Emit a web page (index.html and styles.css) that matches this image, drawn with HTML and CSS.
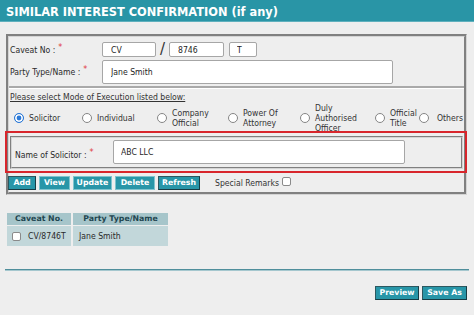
FILE: index.html
```html
<!DOCTYPE html>
<html>
<head>
<meta charset="utf-8">
<link rel="stylesheet" href="styles.css">
</head>
<body>
<div class="header">SIMILAR INTEREST CONFIRMATION (if any)</div>
<div class="main">
  <div class="box">
    <div class="row row1">
      <div class="label">Caveat No :<span class="req">*</span></div>
      <input class="inp w-cv" value="CV">
      <span class="slash">/</span>
      <input class="inp w-num" value="8746">
      <input class="inp w-t" value="T">
    </div>
    <div class="row row2">
      <div class="label">Party Type/Name :<span class="req">*</span></div>
      <input class="inp w-party" value="Jane Smith">
    </div>
    <div class="sep"></div>
    <div class="hint">Please select Mode of Execution listed below:</div>
    <div class="radios">
      <div class="opt"><span class="radio checked"></span><span class="otext">Solicitor</span></div>
      <div class="opt"><span class="radio"></span><span class="otext">Individual</span></div>
      <div class="opt"><span class="radio"></span><span class="otext">Company<br>Official</span></div>
      <div class="opt"><span class="radio"></span><span class="otext">Power Of<br>Attorney</span></div>
      <div class="opt"><span class="radio"></span><span class="otext">Duly<br>Authorised<br>Officer</span></div>
      <div class="opt"><span class="radio"></span><span class="otext">Official<br>Title</span></div>
      <div class="opt opt-last"><span class="radio"></span><span class="otext">Others</span></div>
    </div>
    <div class="highlight">
      <div class="inner">
        <div class="label label-sol">Name of Solicitor :<span class="req">*</span></div>
        <input class="inp w-sol" value="ABC LLC">
      </div>
    </div>
    <div class="actions">
      <button class="btn dark w-add">Add</button>
      <button class="btn w-view">View</button>
      <button class="btn w-upd">Update</button>
      <button class="btn w-del">Delete</button>
      <button class="btn dark w-ref">Refresh</button>
      <span class="remarks">Special Remarks</span>
      <span class="check"></span>
    </div>
  </div>

  <div class="grid">
    <div class="th">Caveat No.</div>
    <div class="th">Party Type/Name</div>
    <div class="td td1"><span class="check small"></span><span>CV/8746T</span></div>
    <div class="td td2">Jane Smith</div>
  </div>

  <div class="rule"></div>

  <div class="footer">
    <button class="btn dark w-prev">Preview</button>
    <button class="btn dark w-save">Save As</button>
  </div>
</div>
</body>
</html>
```

FILE: styles.css
```css
* { box-sizing: border-box; }

body {
  margin: 0;
  background: #eeeeee;
  font-family: "DejaVu Sans Condensed", "DejaVu Sans", sans-serif;
  font-stretch: condensed;
  font-size: 8.6px;
  color: #2a2a2a;
  width: 474px;
  height: 315px;
  overflow: hidden;
}

.header {
  height: 22px;
  background: #2995a6;
  color: #ffffff;
  font-family: "DejaVu Sans", sans-serif;
  font-stretch: normal;
  font-weight: bold;
  font-size: 11.4px;
  line-height: 19px;
  padding: 3px 0 0 6px;
  border-bottom: 1px solid #5fb0bd;
}

.main {
  padding: 12px 7px 0 6px;
}

.box {
  border: 3px groove #d4d4d4;
  padding: 0 0 2px 0;
}

.row {
  display: flex;
  align-items: center;
}

.row1 {
  height: 15px;
  margin-top: 5px;
}

.row2 {
  height: 24px;
  margin-top: 3px;
}

.label {
  width: 93px;
  padding-left: 1px;
  flex: none;
}

.req {
  color: #e0383e;
  position: relative;
  top: -3px;
  margin-left: 3px;
  font-size: 9px;
}

.inp {
  font-family: "DejaVu Sans Condensed", "DejaVu Sans", sans-serif;
  font-stretch: condensed;
  font-size: 8.6px;
  color: #1e1e1e;
  background: #ffffff;
  border: 1px solid #a6a6a6;
  border-radius: 2px;
  padding: 0 0 0 8px;
  margin: 0;
  outline: none;
}

.w-cv { width: 54px; height: 15px; }
.w-num { width: 55px; height: 15px; }
.w-t { width: 28px; height: 15px; margin-left: 5px; padding-left: 7px; }
.w-party { width: 291px; height: 24px; }

.slash {
  width: 13px;
  text-align: center;
  font-size: 15px;
  line-height: 15px;
  color: #333;
  font-family: "DejaVu Sans", sans-serif;
  font-stretch: normal;
}

.sep {
  margin-top: 2px;
  border-top: 2px solid #a9a9a9;
  border-bottom: 1px solid #ffffff;
}

.hint {
  margin-top: 3px;
  padding-left: 1px;
  line-height: 10px;
  text-decoration: underline;
  color: #333;
}

.radios {
  display: grid;
  grid-template-columns: 68px 75px 71px 72px 75px 44px auto;
  align-items: center;
  height: 28px;
  padding-left: 5px;
  margin-top: 1px;
}

.opt {
  display: flex;
  align-items: center;
  gap: 5px;
}

.opt-last { gap: 8px; }

.otext {
  line-height: 10px;
  color: #333;
}

.radio {
  width: 10px;
  height: 10px;
  border-radius: 50%;
  border: 1px solid #858585;
  background: #ffffff;
  flex: none;
}

.radio.checked {
  border: 1.5px solid #2a78d6;
  background: #2a78d6;
  box-shadow: inset 0 0 0 1.6px #ffffff;
}

.highlight {
  margin: 0 -3px 0 -4px;
  border: 2px solid #d8262c;
  padding: 3px 2px 2px 3px;
}

.inner {
  display: flex;
  align-items: center;
  height: 33px;
  border: 2px groove #d4d4d4;
  padding: 0 0 1px 0;
}

.label-sol {
  width: 101px;
  padding-left: 3px;
  padding-top: 6px;
}

.w-sol {
  width: 292px;
  height: 24px;
  padding-left: 7px;
}

.actions {
  display: flex;
  align-items: center;
  gap: 3px;
  margin-top: 3px;
  margin-left: -1px;
  height: 14px;
}

.btn {
  height: 14px;
  padding: 0;
  margin: 0;
  background: #2896a8;
  color: #ffffff;
  font-family: "DejaVu Sans", sans-serif;
  font-stretch: normal;
  font-weight: bold;
  font-size: 7.8px;
  border: 1px solid #7fc4ce;
  text-align: center;
  line-height: 12px;
}

.btn.dark {
  border: 1px solid #173c44;
  border-top-color: #2c5860;
  border-left-color: #2c5860;
}

.w-add { width: 28px; }
.w-view { width: 31px; }
.w-upd { width: 39px; }
.w-del { width: 40px; }
.w-ref { width: 42px; }
.w-prev { width: 44px; }
.w-save { width: 45px; }

.remarks {
  margin-left: 12px;
  color: #333;
}

.check {
  width: 9px;
  height: 9px;
  border: 1px solid #8a8a8a;
  border-radius: 2px;
  background: #ffffff;
  margin-left: 0;
  margin-top: -4px;
}

.check.small {
  margin-top: 0;
  width: 9px;
  height: 9px;
}

.grid {
  display: grid;
  grid-template-columns: 64px 95px;
  column-gap: 2px;
  row-gap: 1px;
  margin-top: 18px;
  margin-left: 1px;
  width: 161px;
}

.th {
  background: #a6c5ca;
  color: #1f4650;
  font-family: "DejaVu Sans", sans-serif;
  font-stretch: normal;
  font-weight: bold;
  font-size: 7.8px;
  text-align: center;
  height: 12px;
  line-height: 12px;
}

.td {
  background: #c2d7da;
  height: 20px;
  display: flex;
  align-items: center;
  color: #2a2a2a;
}

.td1 {
  padding-left: 5px;
  gap: 7px;
}

.td2 {
  padding-left: 6px;
}

.rule {
  margin: 23px -2px 0 -1px;
  border-top: 1px solid #4f8e9b;
  border-bottom: 1px solid #a5c7ce;
}

.footer {
  display: flex;
  justify-content: flex-end;
  gap: 3px;
  margin-top: 15px;
}
```
